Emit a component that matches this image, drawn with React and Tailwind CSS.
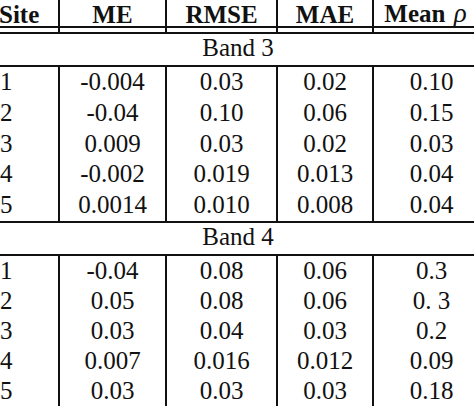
const band3 = [
  ['1', '-0.004', '0.03', '0.02', '0.10'],
  ['2', '-0.04', '0.10', '0.06', '0.15'],
  ['3', '0.009', '0.03', '0.02', '0.03'],
  ['4', '-0.002', '0.019', '0.013', '0.04'],
  ['5', '0.0014', '0.010', '0.008', '0.04'],
]

const band4 = [
  ['1', '-0.04', '0.08', '0.06', '0.3'],
  ['2', '0.05', '0.08', '0.06', '0. 3'],
  ['3', '0.03', '0.04', '0.03', '0.2'],
  ['4', '0.007', '0.016', '0.012', '0.09'],
  ['5', '0.03', '0.03', '0.03', '0.18'],
]

const cols = 'grid grid-cols-[60px_107px_111px_96px_115px] w-[489px]'

function Rule() {
  return <div className="h-[2px] w-full bg-[#111]" />
}

function BandRow({ label }) {
  return (
    <div className="flex h-[31px] items-start justify-center pl-[2px] leading-[27px]">{label}</div>
  )
}

function DataRows({ rows, rowHeight }) {
  return (
    <div>
      {rows.map((row) => (
        <div key={row[0]} className={`${cols} ${rowHeight} leading-[30px]`}>
          <div className="border-r-2 border-[#111] text-left">{row[0]}</div>
          <div className="border-r-2 border-[#111] text-center">{row[1]}</div>
          <div className="border-r-2 border-[#111] text-center">{row[2]}</div>
          <div className="border-r-2 border-[#111] text-center">{row[3]}</div>
          <div className="text-center">{row[4]}</div>
        </div>
      ))}
    </div>
  )
}

export default function App() {
  return (
    <div className="h-[406px] w-[474px] overflow-hidden bg-white font-['Liberation_Serif','Times_New_Roman',serif] text-[25px] text-[#111]">
      <div className={`${cols} h-[26px] font-bold leading-none`}>
        <div className="flex items-end border-r-2 border-[#111] pb-[5px]">
          <span className="-ml-[1px]">Site</span>
        </div>
        <div className="flex items-end justify-center border-r-2 border-[#111] pb-[5px]">ME</div>
        <div className="flex items-end justify-center border-r-2 border-[#111] pb-[5px]">RMSE</div>
        <div className="flex items-end justify-center border-r-2 border-[#111] pb-[5px]">MAE</div>
        <div className="flex items-end justify-center pb-[5px] pr-[12px]">
          <span>
            Mean <span className="ml-[2px] text-[27px] font-normal italic">ρ</span>
          </span>
        </div>
      </div>
      <Rule />
      <div className="h-[4px]" />
      <Rule />
      <BandRow label="Band 3" />
      <Rule />
      <DataRows rows={band3} rowHeight="h-[30.75px]" />
      <Rule />
      <BandRow label="Band 4" />
      <Rule />
      <DataRows rows={band4} rowHeight="h-[30px]" />
    </div>
  )
}
